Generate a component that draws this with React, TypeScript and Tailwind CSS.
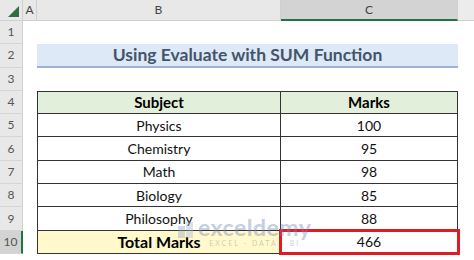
import React from "react";

const rows: Array<[string, string]> = [
  ["Physics", "100"],
  ["Chemistry", "95"],
  ["Math", "98"],
  ["Biology", "85"],
  ["Philosophy", "88"],
];

function RowHead({ n, active }: { n: number; active?: boolean }) {
  return (
    <div
      className={
        "flex items-center justify-center border-b border-[#d6d6d6] text-[12px] text-[#555] " +
        (active ? "border-r-2 border-r-[#217346] bg-[#d3d3d3]" : "border-r border-r-[#cfcfcf] bg-[#e8e8e8]")
      }
    >
      {n}
    </div>
  );
}

export default function App() {
  return (
    <div
      className="relative h-[260px] w-[474px] overflow-hidden bg-white"
      style={{ fontFamily: "Lato, 'Open Sans', sans-serif" }}
    >
      <div className="grid grid-cols-[23px_14px_244px_177px_16px] grid-rows-[21px_repeat(10,23.3px)]">
        {/* column headers */}
        <div className="relative border-b border-r border-[#cfcfcf] bg-[#e8e8e8]">
          <div className="absolute bottom-[3px] right-[3px] h-0 w-0 border-b-[11px] border-l-[11px] border-b-[#2f6e45] border-l-transparent" />
        </div>
        <div className="flex items-center justify-center border-b border-r border-[#cfcfcf] bg-[#e8e8e8] text-[12px] text-[#444]">A</div>
        <div className="flex items-center justify-center border-b border-r border-[#cfcfcf] bg-[#e8e8e8] text-[12px] text-[#444]">B</div>
        <div className="flex items-center justify-center border-b-2 border-r border-b-[#217346] border-r-[#cfcfcf] bg-[#d3d3d3] text-[12px] text-[#444]">C</div>
        <div className="border-b border-[#cfcfcf] bg-[#ececec]" />

        {/* row 1 */}
        <RowHead n={1} />
        <div className="col-span-4" />

        {/* row 2 title */}
        <RowHead n={2} />
        <div />
        <div className="col-span-2 flex items-center justify-center border-b-2 border-[#9db3d3] bg-[#dde9f6] text-[17.5px] font-bold text-[#44546a]">
          Using Evaluate with SUM Function
        </div>
        <div />

        {/* row 3 */}
        <RowHead n={3} />
        <div className="col-span-4" />

        {/* row 4 header */}
        <RowHead n={4} />
        <div />
        <div className="flex items-center justify-center border border-[#333] bg-[#e2efda] text-[15px] font-bold text-black">Subject</div>
        <div className="flex items-center justify-center border-y border-r border-[#333] bg-[#e2efda] text-[15px] font-bold text-black">Marks</div>
        <div />

        {rows.map(([subject, mark], i) => (
          <React.Fragment key={subject}>
            <RowHead n={5 + i} />
            <div />
            <div className="flex items-center justify-center border-x border-b border-[#333] text-[14px] text-[#111]">{subject}</div>
            <div className="flex items-center justify-center border-b border-r border-[#333] text-[14px] text-[#111]">{mark}</div>
            <div />
          </React.Fragment>
        ))}

        {/* row 10 total */}
        <RowHead n={10} active />
        <div />
        <div className="flex items-center justify-center border-x border-b border-[#333] bg-[#fff9cc] text-[16px] font-bold text-black">Total Marks</div>
        <div className="relative flex items-center justify-center border-b border-r border-[#333] bg-white text-[14px] text-[#111]">
          466
          <div className="absolute -left-[2px] -right-[3px] -top-[2px] -bottom-[2px] border-[3px] border-[#e01b22]" />
        </div>
        <div />
      </div>

      {/* watermark */}
      <div className="pointer-events-none absolute left-[178px] top-[216px] flex items-start gap-[4px] opacity-40">
        <svg width="16" height="18" viewBox="0 0 16 18" className="mt-[4px]">
          <rect x="0" y="6" width="7" height="12" fill="#8ea3c2" />
          <rect x="8" y="2" width="7" height="16" fill="#a9b9d3" />
        </svg>
        <div className="flex flex-col items-center leading-none">
          <span className="text-[23px] font-bold tracking-[0.5px] text-[#6f88b8]">exceldemy</span>
          <span className="mt-[1px] text-[7px] tracking-[2px] text-[#8a8a8a]">EXCEL - DATA - BI</span>
        </div>
      </div>
    </div>
  );
}
